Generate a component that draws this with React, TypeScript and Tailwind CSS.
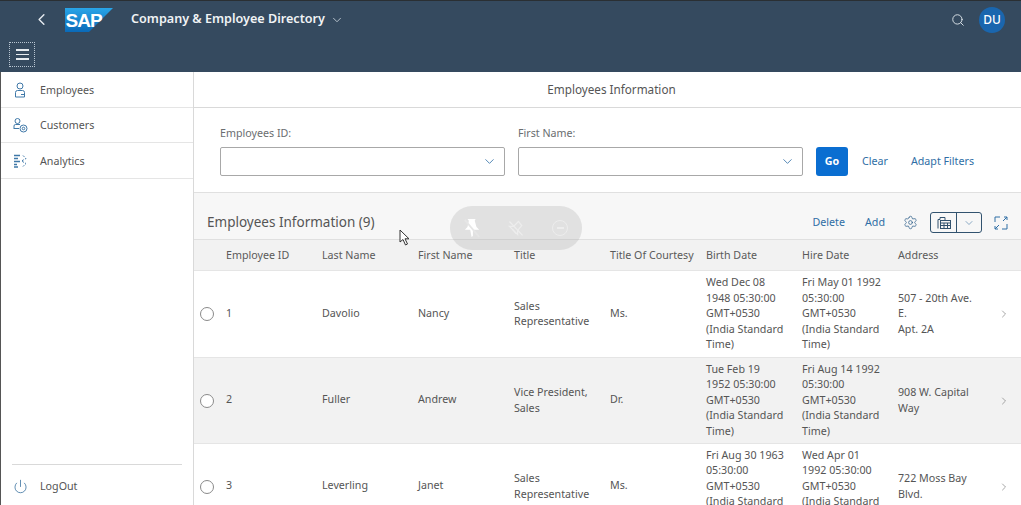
import { ChevronDown, ChevronLeft, ChevronRight, Power, Search, Settings } from "lucide-react";

const columns = ["Employee ID", "Last Name", "First Name", "Title", "Title Of Courtesy", "Birth Date", "Hire Date", "Address"];

const rows = [
  {
    id: "1", last: "Davolio", first: "Nancy", title: ["Sales", "Representative"], courtesy: "Ms.",
    birth: ["Wed Dec 08", "1948 05:30:00", "GMT+0530", "(India Standard", "Time)"],
    hire: ["Fri May 01 1992", "05:30:00", "GMT+0530", "(India Standard", "Time)"],
    address: ["507 - 20th Ave.", "E.", "Apt. 2A"], height: "h-[87px]", bg: "bg-white",
  },
  {
    id: "2", last: "Fuller", first: "Andrew", title: ["Vice President,", "Sales"], courtesy: "Dr.",
    birth: ["Tue Feb 19", "1952 05:30:00", "GMT+0530", "(India Standard", "Time)"],
    hire: ["Fri Aug 14 1992", "05:30:00", "GMT+0530", "(India Standard", "Time)"],
    address: ["908 W. Capital", "Way"], height: "h-[86px]", bg: "bg-[#f2f2f2]",
  },
  {
    id: "3", last: "Leverling", first: "Janet", title: ["Sales", "Representative"], courtesy: "Ms.",
    birth: ["Fri Aug 30 1963", "05:30:00", "GMT+0530", "(India Standard", "Time)"],
    hire: ["Wed Apr 01", "1992 05:30:00", "GMT+0530", "(India Standard", "Time)"],
    address: ["722 Moss Bay", "Blvd."], height: "h-[86px]", bg: "bg-white",
  },
];

function Lines({ lines }: { lines: string[] }) {
  return (
    <div className="leading-[15.5px]">
      {lines.map((l, i) => (
        <div key={i} className="whitespace-nowrap">{l}</div>
      ))}
    </div>
  );
}

function SapLogo() {
  return (
    <svg width="48" height="24" viewBox="0 0 48 24" className="block">
      <defs>
        <linearGradient id="sapg" x1="0" y1="0" x2="0" y2="1">
          <stop offset="0" stopColor="#29a5e8" />
          <stop offset="1" stopColor="#0a6ab8" />
        </linearGradient>
      </defs>
      <polygon points="0,0 48,0 24,24 0,24" fill="url(#sapg)" />
      <text x="0.5" y="18.5" fontFamily="Liberation Sans, sans-serif" fontWeight="700" fontSize="19" fill="#fff" letterSpacing="-1">SAP</text>
    </svg>
  );
}

function EmployeeIcon() {
  return (
    <svg width="14" height="16" viewBox="0 0 14 16" fill="none" stroke="#3f78a8" strokeWidth="1">
      <circle cx="7" cy="4" r="3" />
      <path d="M2.5 15V10.5A2 2 0 0 1 4.500 8.500H9.500A2 2 0 0 1 11.500 10.500V15Z" />
      <path d="M8 12.500H11" />
    </svg>
  );
}

function CustomerIcon() {
  return (
    <svg width="15" height="15" viewBox="0 0 15 15" fill="none" stroke="#3f78a8" strokeWidth="1">
      <circle cx="4.500" cy="3" r="2.500" />
      <path d="M1 11V8A1.500 1.500 0 0 1 2.500 6.500H7M1 10.500H6" />
      <circle cx="10.500" cy="10.500" r="3.500" />
      <circle cx="10.500" cy="10.500" r="1.300" />
    </svg>
  );
}

function AnalyticsIcon() {
  return (
    <svg width="14" height="14" viewBox="0 0 14 14" fill="none" stroke="#3f78a8" strokeWidth="1.400">
      <path d="M1 1.500H7M1 4.500H5M1 7.500H7M1 10.500H4M1 13H5" />
      <path d="M10 1.500L13 4.500L8.500 7L13 9.500L10 12.500" strokeWidth="1" strokeDasharray="2 1.400" />
    </svg>
  );
}

function TableViewIcon() {
  return (
    <svg width="16" height="14" viewBox="0 0 16 14" fill="none" stroke="#32536f" strokeWidth="1">
      <path d="M2 12.500V3.500H4V1.500H9V4" />
      <rect x="4.500" y="4.500" width="10" height="8" />
      <path d="M4.500 7H14.500M4.500 9.500H14.500M8 7V12.500M11.500 7V12.500" />
    </svg>
  );
}

function ExpandIcon() {
  return (
    <svg width="14" height="14" viewBox="0 0 14 14" fill="none" stroke="#2f6ea5" strokeWidth="1">
      <path d="M6 1H1V6M8 13H13V8M1 13L5 9M1 13V10M1 13H4M13 1L9 5M13 1V4M13 1H10" />
    </svg>
  );
}

function PinOff() {
  return (
    <svg width="18" height="20" viewBox="0 0 20 22" fill="#fff">
      <path d="M5 1H14L13 3L15 10L18 13H11V20L9.500 21L8 13H2L5 10L6.500 3Z" />
      <path d="M2 2L18 21" stroke="#e6e6e6" strokeWidth="2" />
    </svg>
  );
}

function SoundOff() {
  return (
    <svg width="18" height="18" viewBox="0 0 22 22" fill="none" stroke="#ededed" strokeWidth="1.500">
      <path d="M3 9L8 9L14 3L18 8L13 14V19Z" />
      <path d="M3 3L19 20M7 13L11 18" />
    </svg>
  );
}

function Cursor() {
  return (
    <svg width="12" height="17" viewBox="0 0 12 17" className="absolute left-[399px] top-[229px]" fill="#fff" stroke="#333" strokeWidth="1">
      <path d="M1 1V13L4 10.500L6.500 16L8.500 15L6 9.800H10Z" />
    </svg>
  );
}

function NavItem({ icon, label, h }: { icon: React.ReactNode; label: string; h: string }) {
  return (
    <div className={`flex items-center border-b border-[#e5e5e5] pt-[1px] ${h}`}>
      <div className="flex w-[39px] justify-center pr-[1px]">{icon}</div>
      <span>{label}</span>
    </div>
  );
}

export default function App() {
  return (
    <div className="relative flex h-screen w-full flex-col overflow-hidden bg-white text-[10.7px] text-[#555] [font-family:'Noto_Sans',sans-serif]">
      <header className="flex h-[72px] shrink-0 flex-col border-t border-[#2a2f33] bg-[#354a5f] text-white">
        <div className="flex h-[37px] items-center">
          <ChevronLeft className="ml-[32px] h-[19px] w-[19px]" strokeWidth={1.8} color="#e6ebf0" />
          <div className="ml-[14px]"><SapLogo /></div>
          <span className="ml-[18px] text-[12.6px] font-semibold text-[#f0f3f5]">Company &amp; Employee Directory</span>
          <ChevronDown className="ml-[5px] h-[14px] w-[14px]" strokeWidth={1.4} color="#cfd8e0" />
          <Search className="ml-auto h-[14px] w-[14px]" strokeWidth={1.6} color="#dfe6ec" />
          <div className="ml-[14px] mr-[16px] flex h-[26px] w-[26px] items-center justify-center rounded-full bg-[#1a66ae] text-[12px] font-medium">DU</div>
        </div>
        <div className="ml-[9px] mt-[4px] flex h-[25px] w-[26px] flex-col items-center justify-center gap-[3px] border border-dotted border-[#b9c6d2]">
          <div className="h-[1.5px] w-[13px] bg-[#e6ebf0]" />
          <div className="h-[1.5px] w-[13px] bg-[#e6ebf0]" />
          <div className="h-[1.5px] w-[13px] bg-[#e6ebf0]" />
        </div>
      </header>

      <div className="flex min-h-0 flex-1">
        <aside className="flex w-[194px] shrink-0 flex-col border-l border-r border-l-[#555] border-r-[#d9d9d9]">
          <NavItem h="h-[36px]" icon={<EmployeeIcon />} label="Employees" />
          <NavItem h="h-[35px]" icon={<CustomerIcon />} label="Customers" />
          <NavItem h="h-[36px]" icon={<AnalyticsIcon />} label="Analytics" />
          <div className="ml-[11px] mr-[11px] mb-[7px] mt-auto border-t border-[#d9d9d9] pt-[9px]">
            <div className="flex h-[24px] items-center">
              <Power className="ml-[1px] h-[15px] w-[15px]" strokeWidth={1.2} color="#2f6a9a" />
              <span className="ml-[12px]">LogOut</span>
            </div>
          </div>
        </aside>

        <main className="min-w-0 flex-1">
          <div className="flex h-[36px] items-center justify-center border-b border-[#d9d9d9] pl-[8px] text-[11.7px]">Employees Information</div>

          <div className="flex h-[85px] items-start border-b border-[#e0e0e0] pl-[26px] pt-[18px]">
            <div className="w-[285px]">
              <div className="mb-[6px] leading-[15px] text-[#6a6d70]">Employees ID:</div>
              <div className="flex h-[29px] items-center justify-end rounded-[2px] border border-[#a8a8a8] pr-[7px]">
                <ChevronDown className="h-[15px] w-[15px]" strokeWidth={1.3} color="#2f6ea5" />
              </div>
            </div>
            <div className="ml-[13px] w-[285px]">
              <div className="mb-[6px] leading-[15px] text-[#6a6d70]">First Name:</div>
              <div className="flex h-[29px] items-center justify-end rounded-[2px] border border-[#a8a8a8] pr-[7px]">
                <ChevronDown className="h-[15px] w-[15px]" strokeWidth={1.3} color="#2f6ea5" />
              </div>
            </div>
            <div className="ml-[13px] mt-[21px] flex h-[29px] items-center">
              <div className="flex h-[29px] w-[32px] items-center justify-center rounded-[3px] bg-[#0a6ed1] font-bold text-white">Go</div>
              <span className="ml-[14px] text-[#2f6ea5]">Clear</span>
              <span className="ml-[23px] text-[#2f6ea5]">Adapt Filters</span>
            </div>
          </div>

          <div className="flex h-[47px] items-center border-b border-[#e0e0e0] bg-[#f7f7f7] pl-[13px] pt-[13px]">
            <span className="text-[13.5px]">Employees Information (9)</span>
            <span className="ml-auto text-[#2f6ea5]">Delete</span>
            <span className="ml-[20px] text-[#2f6ea5]">Add</span>
            <Settings className="ml-[18px] h-[15px] w-[15px]" strokeWidth={1.2} color="#2f5f8a" />
            <div className="ml-[12px] flex h-[21px] w-[52px] items-center rounded-[3px] border border-[#32536f]">
              <div className="flex h-full w-[26px] items-center justify-center border-r border-[#32536f]">
                <TableViewIcon />
              </div>
              <div className="flex flex-1 items-center justify-center">
                <ChevronDown className="h-[12px] w-[12px]" strokeWidth={1.3} color="#4f7fa8" />
              </div>
            </div>
            <div className="ml-[12px] mr-[13px]"><ExpandIcon /></div>
          </div>

          <div className="grid h-[31px] grid-cols-[32px_repeat(8,96px)_1fr] items-center border-b border-[#e5e5e5] bg-[#f2f2f2] pt-[1px] text-[#5a5a5a]">
            <div />
            {columns.map((c) => (
              <div key={c} className="whitespace-nowrap">{c}</div>
            ))}
          </div>

          {rows.map((r) => (
            <div key={r.id} className={`grid grid-cols-[32px_repeat(8,96px)_1fr] items-center border-b border-[#e5e5e5] ${r.height} ${r.bg}`}>
              <div className="flex justify-center pr-[6px]">
                <div className="h-[14px] w-[14px] rounded-full border border-[#8a8a8a] bg-white" />
              </div>
              <div className="pb-[2px]">{r.id}</div>
              <div className="pb-[2px]">{r.last}</div>
              <div className="pb-[2px]">{r.first}</div>
              <Lines lines={r.title} />
              <div className="pb-[2px]">{r.courtesy}</div>
              <Lines lines={r.birth} />
              <Lines lines={r.hire} />
              <Lines lines={r.address} />
              <ChevronRight className="ml-[4px] h-[12px] w-[12px]" strokeWidth={1.3} color="#777" />
            </div>
          ))}
        </main>
      </div>

      <div className="absolute left-[450px] top-[206px] flex h-[44px] w-[132px] items-center rounded-full bg-[#a0a0a0]/25 pl-[13px]">
        <PinOff />
        <div className="ml-[26px]"><SoundOff /></div>
        <div className="ml-[27px] flex h-[16px] w-[16px] items-center justify-center rounded-full border-[1.5px] border-[#ededed]">
          <div className="h-[1.5px] w-[7px] bg-[#ededed]" />
        </div>
      </div>
      <Cursor />
    </div>
  );
}
